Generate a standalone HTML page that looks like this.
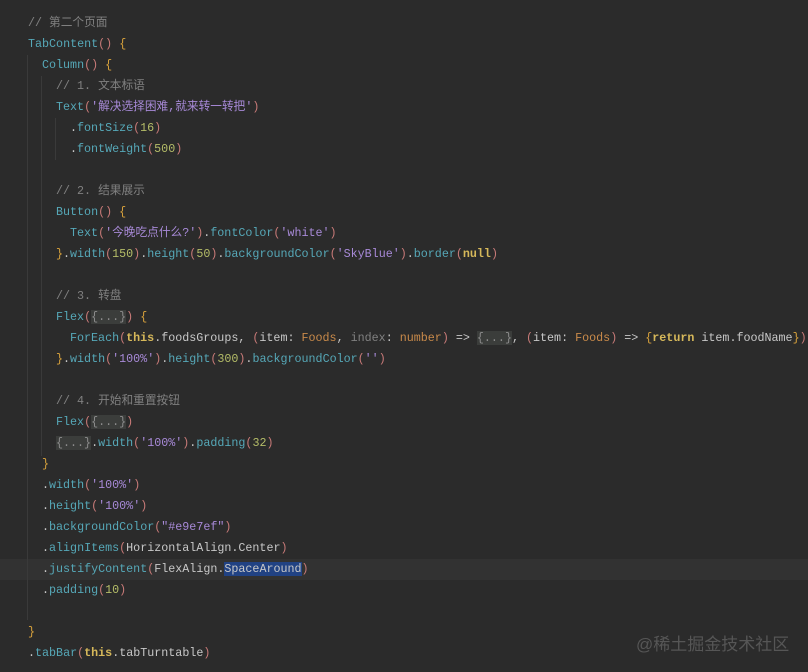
<!DOCTYPE html>
<html><head><meta charset="utf-8"><style>
html,body{margin:0;padding:0;background:#2b2b2b;width:808px;height:672px;overflow:hidden;position:relative}
.l{position:absolute;left:0;white-space:pre;font-family:"Liberation Mono","Noto Sans CJK SC",monospace;font-size:11.7px;line-height:21px;height:21px;color:#a9b7c6}
.c{color:#808080}
.m{color:#56a8b8}
.s{color:#a88ad8}
.n{color:#b5bd68}
.b{color:#d8a23c}
.p{color:#c87a78}
.k{color:#d6b85a;font-weight:bold}
.t{color:#c98a4a}
.w{color:#c8c8c8}
.f{background:#3b3d3b;color:#8c8c8c}
.sel{background:#214283;color:#c8c8c8}
.g{position:absolute;width:1px;background:#3a3a3a}
.cur{position:absolute;left:0;width:808px;top:559px;height:21px;background:#323232}
.wm{position:absolute;left:636px;top:630px;font-family:"Liberation Sans","Noto Sans CJK SC",sans-serif;font-size:17px;color:#565656}
</style></head><body>
<div class="cur"></div>
<div class="g" style="left:27px;top:55px;height:565px"></div>
<div class="g" style="left:41px;top:76px;height:380px"></div>
<div class="g" style="left:55px;top:118px;height:42px"></div>
<div class="l" style="top:13px;left:28px"><span class="c">// 第二个页面</span></div>
<div class="l" style="top:34px;left:28px"><span class="m">TabContent</span><span class="p">()</span> <span class="b">{</span></div>
<div class="l" style="top:55px;left:42px"><span class="m">Column</span><span class="p">()</span> <span class="b">{</span></div>
<div class="l" style="top:76px;left:56px"><span class="c">// 1. 文本标语</span></div>
<div class="l" style="top:97px;left:56px"><span class="m">Text</span><span class="p">(</span><span class="s">'解决选择困难,就来转一转把'</span><span class="p">)</span></div>
<div class="l" style="top:118px;left:70px"><span class="w">.</span><span class="m">fontSize</span><span class="p">(</span><span class="n">16</span><span class="p">)</span></div>
<div class="l" style="top:139px;left:70px"><span class="w">.</span><span class="m">fontWeight</span><span class="p">(</span><span class="n">500</span><span class="p">)</span></div>
<div class="l" style="top:181px;left:56px"><span class="c">// 2. 结果展示</span></div>
<div class="l" style="top:202px;left:56px"><span class="m">Button</span><span class="p">()</span> <span class="b">{</span></div>
<div class="l" style="top:223px;left:70px"><span class="m">Text</span><span class="p">(</span><span class="s">'今晚吃点什么?'</span><span class="p">)</span><span class="w">.</span><span class="m">fontColor</span><span class="p">(</span><span class="s">'white'</span><span class="p">)</span></div>
<div class="l" style="top:244px;left:56px"><span class="b">}</span><span class="w">.</span><span class="m">width</span><span class="p">(</span><span class="n">150</span><span class="p">)</span><span class="w">.</span><span class="m">height</span><span class="p">(</span><span class="n">50</span><span class="p">)</span><span class="w">.</span><span class="m">backgroundColor</span><span class="p">(</span><span class="s">'SkyBlue'</span><span class="p">)</span><span class="w">.</span><span class="m">border</span><span class="p">(</span><span class="k">null</span><span class="p">)</span></div>
<div class="l" style="top:286px;left:56px"><span class="c">// 3. 转盘</span></div>
<div class="l" style="top:307px;left:56px"><span class="m">Flex</span><span class="p">(</span><span class="f">{...}</span><span class="p">)</span> <span class="b">{</span></div>
<div class="l" style="top:328px;left:70px"><span class="m">ForEach</span><span class="p">(</span><span class="k">this</span><span class="w">.foodsGroups, </span><span class="p">(</span><span class="w">item: </span><span class="t">Foods</span><span class="w">, </span><span class="c">index</span><span class="w">: </span><span class="t">number</span><span class="p">)</span><span class="w"> =&gt; </span><span class="f">{...}</span><span class="w">, </span><span class="p">(</span><span class="w">item: </span><span class="t">Foods</span><span class="p">)</span><span class="w"> =&gt; </span><span class="b">{</span><span class="k">return</span><span class="w"> item.foodName</span><span class="b">}</span><span class="p">)</span></div>
<div class="l" style="top:349px;left:56px"><span class="b">}</span><span class="w">.</span><span class="m">width</span><span class="p">(</span><span class="s">'100%'</span><span class="p">)</span><span class="w">.</span><span class="m">height</span><span class="p">(</span><span class="n">300</span><span class="p">)</span><span class="w">.</span><span class="m">backgroundColor</span><span class="p">(</span><span class="s">''</span><span class="p">)</span></div>
<div class="l" style="top:391px;left:56px"><span class="c">// 4. 开始和重置按钮</span></div>
<div class="l" style="top:412px;left:56px"><span class="m">Flex</span><span class="p">(</span><span class="f">{...}</span><span class="p">)</span></div>
<div class="l" style="top:433px;left:56px"><span class="f">{...}</span><span class="w">.</span><span class="m">width</span><span class="p">(</span><span class="s">'100%'</span><span class="p">)</span><span class="w">.</span><span class="m">padding</span><span class="p">(</span><span class="n">32</span><span class="p">)</span></div>
<div class="l" style="top:454px;left:42px"><span class="b">}</span></div>
<div class="l" style="top:475px;left:42px"><span class="w">.</span><span class="m">width</span><span class="p">(</span><span class="s">'100%'</span><span class="p">)</span></div>
<div class="l" style="top:496px;left:42px"><span class="w">.</span><span class="m">height</span><span class="p">(</span><span class="s">'100%'</span><span class="p">)</span></div>
<div class="l" style="top:517px;left:42px"><span class="w">.</span><span class="m">backgroundColor</span><span class="p">(</span><span class="s">"#e9e7ef"</span><span class="p">)</span></div>
<div class="l" style="top:538px;left:42px"><span class="w">.</span><span class="m">alignItems</span><span class="p">(</span><span class="w">HorizontalAlign.Center</span><span class="p">)</span></div>
<div class="l" style="top:559px;left:42px"><span class="w">.</span><span class="m">justifyContent</span><span class="p">(</span><span class="w">FlexAlign.</span><span class="sel">SpaceAround</span><span class="p">)</span></div>
<div class="l" style="top:580px;left:42px"><span class="w">.</span><span class="m">padding</span><span class="p">(</span><span class="n">10</span><span class="p">)</span></div>
<div class="l" style="top:622px;left:28px"><span class="b">}</span></div>
<div class="l" style="top:643px;left:28px"><span class="w">.</span><span class="m">tabBar</span><span class="p">(</span><span class="k">this</span><span class="w">.tabTurntable</span><span class="p">)</span></div>
<div class="wm">@稀土掘金技术社区</div>
</body></html>
